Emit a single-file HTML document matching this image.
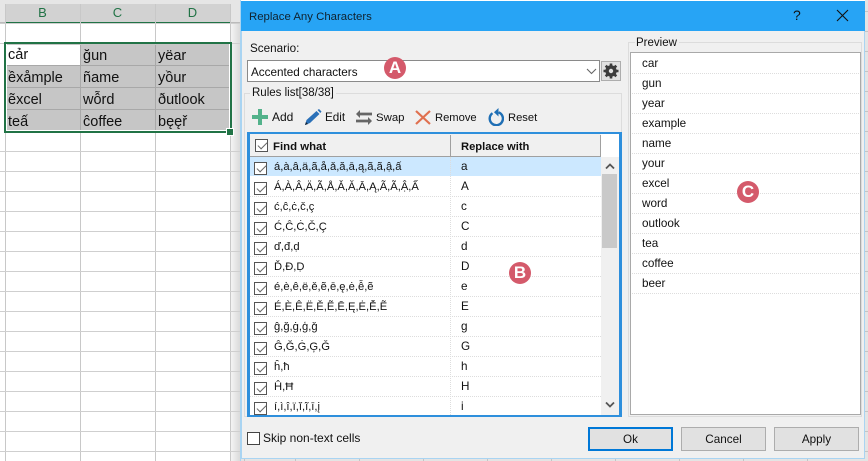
<!DOCTYPE html>
<html><head><meta charset="utf-8"><style>
html,body{margin:0;padding:0}
body{width:868px;height:461px;overflow:hidden;position:relative;background:#fff;font:11.7px/16px "Liberation Sans","DejaVu Sans",sans-serif;color:#111}
div,span,svg{position:absolute;box-sizing:border-box}
.t{white-space:nowrap}
.h{background:#cfcfcf;height:1px;left:0;width:240px}
.c{font-size:14.5px;line-height:20px;white-space:nowrap;color:#111}
.r{left:250px;width:351px;height:20px;border-bottom:1px dotted #ddd}
.r .x{left:4px;top:5px;width:13px;height:13px;border:1px solid #555;background:#fff}
.r .x:after,.hc:after{content:"";position:absolute;left:2px;top:1.5px;width:8px;height:4px;border-left:1.4px solid #666;border-bottom:1.4px solid #666;transform:rotate(-45deg)}
.r .a{left:24px;top:1px;font-size:11.2px;line-height:18px;white-space:nowrap;font-family:"Liberation Sans","DejaVu Sans",sans-serif;color:#111}
.r .b{left:211px;top:1px;line-height:18px}
.p{left:632px;width:227px;height:20px;border-bottom:1px dotted #ddd;padding:0}
.p span{left:10px;top:1px;line-height:18px}
.btn{top:427px;width:85px;height:24px;background:#e1e1e1;border:1px solid #adadad;text-align:center;line-height:22px;padding-top:1px}
.bd{width:22px;height:22px;border-radius:50%;background:#d45a6b;color:#fff;text-align:center;font-size:17px;line-height:22px;font-weight:bold}
.tb{top:110px;line-height:16px}
</style></head><body>
<div style="left:0;top:0;width:240px;height:4px;background:#e6e6e6"></div>
<div style="left:0;top:4px;width:5px;height:19px;background:#e6e6e6"></div>
<div style="left:5px;top:4px;width:226px;height:18px;background:#d2d2d2"></div>
<div style="left:231px;top:0;width:9px;height:23px;background:#e6e6e6"></div>
<div style="left:0;top:22px;width:5px;height:1px;background:#bbb"></div>
<div style="left:231px;top:22px;width:9px;height:1px;background:#bbb"></div>
<div style="left:5px;top:22px;width:226px;height:2px;background:#217346"></div>
<div class="t" style="left:5px;top:5px;width:75px;text-align:center;color:#217346;font-size:13px">B</div>
<div class="t" style="left:80px;top:5px;width:75px;text-align:center;color:#217346;font-size:13px">C</div>
<div class="t" style="left:155px;top:5px;width:75px;text-align:center;color:#217346;font-size:13px">D</div>
<div style="left:231px;top:23px;width:9px;height:438px;background:linear-gradient(90deg,#f4f4f4,#dadada)"></div>
<div style="left:5px;top:4px;width:1px;height:457px;background:#c8c8c8"></div>
<div style="left:80px;top:4px;width:1px;height:457px;background:#c8c8c8"></div>
<div style="left:155px;top:4px;width:1px;height:457px;background:#c8c8c8"></div>
<div style="left:230px;top:4px;width:1px;height:457px;background:#c8c8c8"></div>
<div class="h" style="top:23px"></div><div class="h" style="top:43px"></div>
<div class="h" style="top:151px"></div><div class="h" style="top:171px"></div><div class="h" style="top:191px"></div><div class="h" style="top:211px"></div><div class="h" style="top:231px"></div><div class="h" style="top:251px"></div><div class="h" style="top:271px"></div><div class="h" style="top:291px"></div><div class="h" style="top:311px"></div><div class="h" style="top:331px"></div><div class="h" style="top:351px"></div><div class="h" style="top:371px"></div><div class="h" style="top:391px"></div><div class="h" style="top:411px"></div><div class="h" style="top:431px"></div><div class="h" style="top:451px"></div>
<div style="left:240px;top:0;width:1px;height:461px;background:#a9d4f2"></div>
<div style="left:6px;top:44px;width:224px;height:87px;background:#fff"></div>
<div style="left:7px;top:44px;width:222px;height:86px;background:#c6c6c6"></div>
<div style="left:7px;top:45px;width:73px;height:20px;background:#fff"></div>
<div style="left:80px;top:45px;width:1px;height:85px;background:#a8a8a8"></div>
<div style="left:155px;top:45px;width:1px;height:85px;background:#a8a8a8"></div>
<div style="left:7px;top:65px;width:222px;height:1px;background:#a8a8a8"></div>
<div style="left:7px;top:87px;width:222px;height:1px;background:#a8a8a8"></div>
<div style="left:7px;top:109px;width:222px;height:1px;background:#a8a8a8"></div>
<div style="left:4px;top:42px;width:228px;height:91px;border:2px solid #217346"></div>
<div style="left:227px;top:129px;width:6px;height:6px;background:#217346;border:0;outline:1px solid #fff"></div>
<div class="c" style="left:8px;top:45px">cảr</div><div class="c" style="left:83px;top:46px">ğun</div><div class="c" style="left:158px;top:46px">yëar</div>
<div class="c" style="left:8px;top:68px">ềxåmple</div><div class="c" style="left:83px;top:68px">ñame</div><div class="c" style="left:158px;top:68px">yồur</div>
<div class="c" style="left:8px;top:90px">ẽxcel</div><div class="c" style="left:83px;top:90px">wỗrd</div><div class="c" style="left:158px;top:90px">ðutlook</div>
<div class="c" style="left:8px;top:112px">teấ</div><div class="c" style="left:83px;top:112px">ĉoffee</div><div class="c" style="left:158px;top:112px">bęęř</div>

<div style="left:241px;top:459px;width:627px;height:2px;background:repeating-linear-gradient(90deg,#c4c4c4 0,#c4c4c4 1px,#e4e4e4 1px,#e4e4e4 64px);background-position:54px 0"></div>
<div style="left:865px;top:0;width:3px;height:461px;background:repeating-linear-gradient(180deg,#e4e4e4 0,#e4e4e4 19px,#c4c4c4 19px,#c4c4c4 20px);background-position:0 -8px"></div>
<div style="left:241px;top:1px;width:624px;height:458px;background:#f0f0f0;border:1px solid #a9d4f2;border-top:0"></div>
<div style="left:241px;top:1px;width:624px;height:30px;background:#27a4f5"></div>
<div class="t" style="left:249px;top:9px;color:#10222e;font-size:11.4px">Replace Any Characters</div>
<div class="t" style="left:793px;top:7px;font-size:14px;color:#111">?</div>
<svg style="left:835px;top:8px" width="15" height="15"><path d="M2 2L13 13M13 2L2 13" stroke="#111" stroke-width="1.1" fill="none"/></svg>

<div class="t" style="left:250px;top:41px">Scenario:</div>
<div style="left:247px;top:60px;width:353px;height:22px;background:#fff;border:1px solid #8a8a8a"></div>
<div class="t" style="left:251px;top:65px">Accented characters</div>
<svg style="left:586px;top:68px" width="11" height="7"><path d="M1 1L5.5 5.5L10 1" stroke="#666" stroke-width="1.1" fill="none"/></svg>
<div style="left:601px;top:61px;width:20px;height:20px;background:#e1e1e1;border:1px solid #adadad"></div>
<svg style="left:603px;top:63px" width="16" height="16" viewBox="0 0 16 16"><g stroke="#3c3c3c" stroke-width="2.6"><path d="M8 0.5V15.5M0.5 8H15.5M2.7 2.7L13.3 13.3M13.3 2.7L2.7 13.3"/></g><circle cx="8" cy="8" r="4.2" fill="none" stroke="#3c3c3c" stroke-width="3"/><circle cx="8" cy="8" r="2.2" fill="#e1e1e1"/></svg>
<div class="bd" style="left:384px;top:57px">A</div>

<div style="left:244px;top:93px;width:378px;height:324px;border:1px solid #dcdcdc"></div>
<div class="t" style="left:250px;top:86px;background:#f0f0f0;padding:0 2px;font-size:11.5px;line-height:15px">Rules list[38/38]</div>

<svg style="left:252px;top:109px" width="16" height="16"><path d="M6 0h4v6h6v4h-6v6H6v-6H0V6h6z" fill="#53b28b"/></svg>
<div class="t tb" style="left:272px;font-size:12px;top:109px">Add</div>
<svg style="left:304px;top:109px" width="18" height="17" viewBox="0 0 18 17"><path d="M1 16L2.5 11L12.5 2L15.5 5L6 14z" fill="#2a70b8"/><path d="M13.5 1L15 0L17.5 2.5L16.3 4z" fill="#2a70b8"/><path d="M1 16L2 13L4 15z" fill="#123"/></svg>
<div class="t tb" style="left:325px">Edit</div>
<svg style="left:356px;top:110px" width="16" height="15" viewBox="0 0 16 15"><path d="M0 4L4 0V2.6H16V5.4H4V8z" fill="#666"/><path d="M16 11L12 7V9.6H0V12.4H12V15z" fill="#666"/></svg>
<div class="t tb" style="left:376px;font-size:11.4px">Swap</div>
<svg style="left:415px;top:110px" width="16" height="15"><path d="M1 1L15 14M15 1L1 14" stroke="#e0704f" stroke-width="2.2" fill="none"/></svg>
<div class="t tb" style="left:435px;font-size:11.2px">Remove</div>
<svg style="left:488px;top:108px" width="16" height="18" viewBox="0 0 16 18"><path d="M4.5 5.2A6.6 6.6 0 1 0 10.6 4.4" fill="none" stroke="#1f6fb5" stroke-width="2.4"/><path d="M10.5 0V8.5L6 4.2z" fill="#1f6fb5"/></svg>
<div class="t tb" style="left:508px;font-size:11.2px">Reset</div>

<div style="left:247px;top:132px;width:375px;height:285px;background:#fff;border:solid #2e8fdc;border-width:2px 3px 2px 3px"></div>
<div style="left:250px;top:134px;width:351px;height:23px;background:#f0f0f0;border-bottom:1px solid #a0a0a0"></div>
<div style="left:450px;top:135px;width:1px;height:22px;background:#a0a0a0"></div>
<div style="left:600px;top:135px;width:1px;height:22px;background:#a0a0a0"></div>
<div class="hc" style="left:255px;top:139px;width:13px;height:13px;border:1px solid #555;background:#fff"></div>
<div class="t" style="left:273px;top:139px;font-weight:bold;font-size:11.4px">Find what</div>
<div class="t" style="left:461px;top:139px;font-weight:bold;font-size:11.2px">Replace with</div>
<div style="left:250px;top:157px;width:351px;height:258px;overflow:hidden;background:#fff">
<div style="left:0;top:0;width:351px;height:19px;background:#cce8ff"></div>
<div class="r" style="left:0;top:0;border:0"><div class="x"></div><span class="a">á,à,â,ä,ã,å,ǎ,ă,ā,ą,ã,ã,ậ,ấ</span><span class="b">a</span></div>
<div class="r" style="left:0;top:20px"><div class="x"></div><span class="a">Á,À,Â,Ä,Ã,Å,Ǎ,Ă,Ā,Ą,Ã,Ã,Ậ,Ấ</span><span class="b">A</span></div>
<div class="r" style="left:0;top:40px"><div class="x"></div><span class="a">ć,ĉ,ċ,č,ç</span><span class="b">c</span></div>
<div class="r" style="left:0;top:60px"><div class="x"></div><span class="a">Ć,Ĉ,Ċ,Č,Ç</span><span class="b">C</span></div>
<div class="r" style="left:0;top:80px"><div class="x"></div><span class="a">ď,đ,ḍ</span><span class="b">d</span></div>
<div class="r" style="left:0;top:100px"><div class="x"></div><span class="a">Ď,Đ,Ḍ</span><span class="b">D</span></div>
<div class="r" style="left:0;top:120px"><div class="x"></div><span class="a">é,è,ê,ë,ě,ẽ,ē,ę,ė,ễ,ẽ</span><span class="b">e</span></div>
<div class="r" style="left:0;top:140px"><div class="x"></div><span class="a">É,È,Ê,Ë,Ě,Ẽ,Ē,Ę,Ė,Ễ,Ẽ</span><span class="b">E</span></div>
<div class="r" style="left:0;top:160px"><div class="x"></div><span class="a">ĝ,ğ,ġ,ģ,ǧ</span><span class="b">g</span></div>
<div class="r" style="left:0;top:180px"><div class="x"></div><span class="a">Ĝ,Ğ,Ġ,Ģ,Ǧ</span><span class="b">G</span></div>
<div class="r" style="left:0;top:200px"><div class="x"></div><span class="a">ĥ,ħ</span><span class="b">h</span></div>
<div class="r" style="left:0;top:220px"><div class="x"></div><span class="a">Ĥ,Ħ</span><span class="b">H</span></div>
<div class="r" style="left:0;top:240px"><div class="x"></div><span class="a">í,ì,î,ï,ĭ,ĩ,ī,į</span><span class="b">i</span></div>
<div style="left:200px;top:0;width:1px;height:258px;border-left:1px dotted #ddd"></div>
</div>
<div style="left:601px;top:157px;width:18px;height:258px;background:#f0f0f0"></div>
<div style="left:602px;top:174px;width:15px;height:74px;background:#c9c9c9"></div>
<svg style="left:605px;top:163px" width="10" height="7"><path d="M1 5.5L5 1.5L9 5.5" stroke="#555" stroke-width="1.8" fill="none"/></svg>
<svg style="left:605px;top:401px" width="10" height="7"><path d="M1 1.5L5 5.5L9 1.5" stroke="#555" stroke-width="1.8" fill="none"/></svg>
<div class="bd" style="left:509px;top:262px">B</div>

<div style="left:628px;top:42px;width:234px;height:375px;border:1px solid #dcdcdc"></div>
<div class="t" style="left:635px;top:36px;background:#f0f0f0;padding:0 2px 0 1px;line-height:15px;font-size:11.5px">Preview</div>
<div style="left:630px;top:52px;width:231px;height:363px;background:#fff;border:1px solid #a9a9a9"></div>
<div class="p" style="top:54px"><span>car</span></div>
<div class="p" style="top:74px"><span>gun</span></div>
<div class="p" style="top:94px"><span>year</span></div>
<div class="p" style="top:114px"><span>example</span></div>
<div class="p" style="top:134px"><span>name</span></div>
<div class="p" style="top:154px"><span>your</span></div>
<div class="p" style="top:174px"><span>excel</span></div>
<div class="p" style="top:194px"><span>word</span></div>
<div class="p" style="top:214px"><span>outlook</span></div>
<div class="p" style="top:234px"><span>tea</span></div>
<div class="p" style="top:254px"><span>coffee</span></div>
<div class="p" style="top:274px"><span>beer</span></div>
<div class="bd" style="left:737px;top:181px">C</div>

<div style="left:247px;top:432px;width:13px;height:13px;background:#fff;border:1px solid #444"></div>
<div class="t" style="left:263px;top:430px;font-size:12px">Skip non-text cells</div>
<div class="btn" style="left:588px;border:2px solid #0078d7;line-height:20px">Ok</div>
<div class="btn" style="left:681px">Cancel</div>
<div class="btn" style="left:774px">Apply</div>
</body></html>
